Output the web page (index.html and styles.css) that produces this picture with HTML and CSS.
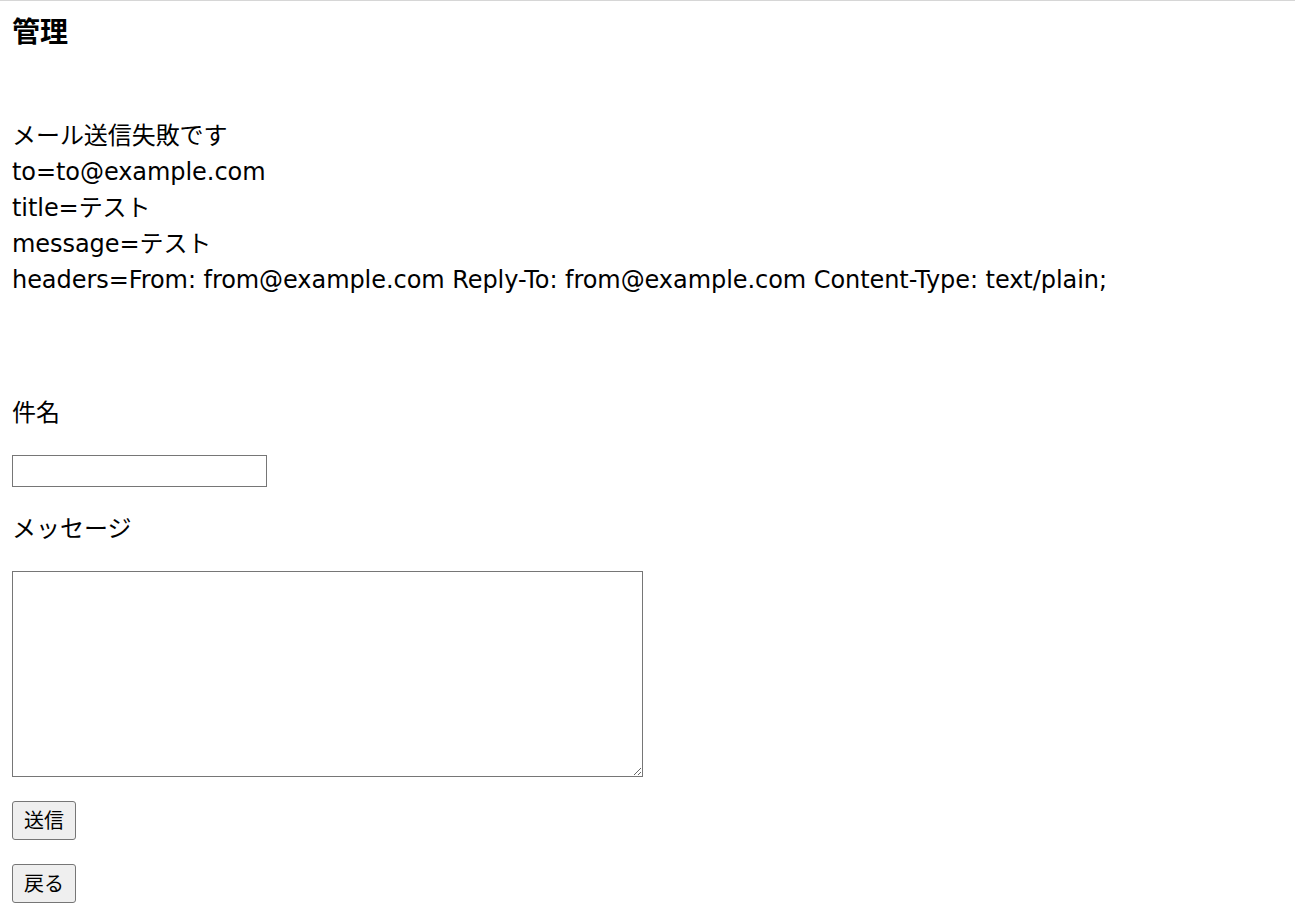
FILE: index.html
```html
<!DOCTYPE html>
<html lang="ja">
<head>
<meta charset="utf-8">
<title>管理</title>
<link rel="stylesheet" href="styles.css">
</head>
<body>
<div class="topline"></div>
<main class="page">
  <h3 class="title">管理</h3>
  <div class="result">
    メール送信失敗です<br>
    to=to@example.com<br>
    title=テスト<br>
    message=テスト<br>
    headers=From: from@example.com Reply-To: from@example.com Content-Type: text/plain;
  </div>
  <form class="form">
    <p class="label">件名</p>
    <input class="subject" type="text">
    <p class="label label-msg">メッセージ</p>
    <textarea class="message"></textarea>
    <button type="button" class="btn btn-send">送信</button>
    <button type="button" class="btn btn-back">戻る</button>
  </form>
</main>
</body>
</html>
```
FILE: styles.css
```css
html, body {
  margin: 0;
  padding: 0;
  background: #fff;
}
body {
  font-family: "DejaVu Sans", "Noto Sans CJK JP", sans-serif;
  color: #000;
}
.topline {
  height: 1px;
  background: #d6d6d6;
}
.page {
  padding: 0 12px;
}
.title {
  margin: 0;
  padding-top: 8px;
  font-family: "Noto Sans CJK JP", sans-serif;
  font-size: 28px;
  font-weight: bold;
  line-height: 42px;
}
.result {
  margin-top: 67px;
  font-size: 24px;
  line-height: 36px;
  letter-spacing: -0.06px;
}
.form {
  display: flex;
  flex-direction: column;
  align-items: flex-start;
  margin-top: 95px;
}
.label {
  margin: 0;
  font-family: "Noto Sans CJK JP", sans-serif;
  font-size: 24px;
  line-height: 36px;
}
.subject {
  margin: 26px 0 0;
  box-sizing: border-box;
  width: 255px;
  height: 32px;
  border: 1px solid #767676;
  border-radius: 0;
  padding: 0 3px;
  font-size: 20px;
}
.label-msg {
  margin-top: 22px;
}
.message {
  margin: 26px 0 0;
  box-sizing: border-box;
  width: 631px;
  height: 206px;
  border: 1px solid #767676;
  border-radius: 0;
  padding: 3px;
}
.btn {
  box-sizing: border-box;
  width: 64px;
  height: 39px;
  margin: 24px 0 0;
  padding: 0 0 2px;
  background: #efefef;
  border: 1px solid #767676;
  border-radius: 3px;
  font-family: "Noto Sans CJK JP", sans-serif;
  font-size: 20px;
  line-height: 1;
  color: #000;
}
```
